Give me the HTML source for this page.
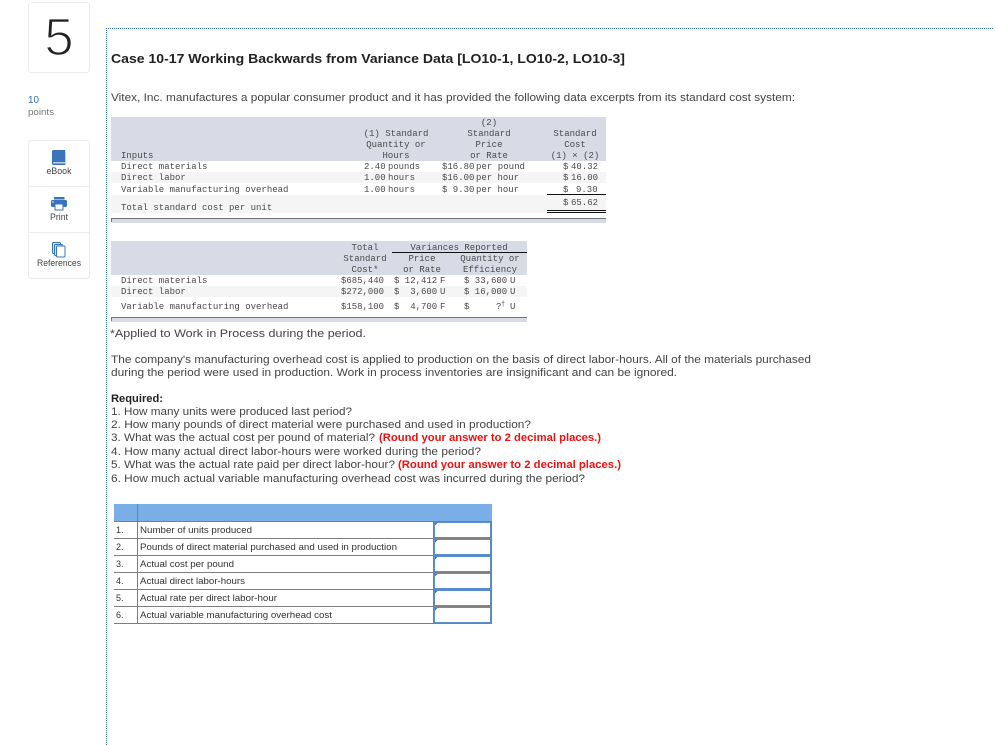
<!DOCTYPE html>
<html><head><meta charset="utf-8"><style>
html,body{margin:0;padding:0;background:#fff;overflow:hidden}
svg{display:block}
text{font-family:"Liberation Sans",sans-serif;fill:#444;white-space:pre}
.m text{font-family:"Liberation Mono",monospace;font-size:9px;fill:#4a4a4a}
.c text{text-anchor:middle}
.s{font-size:11.3px}
.b{font-weight:bold;fill:#222}
.r{font-weight:bold;fill:#f01010}
.t{font-size:9px;fill:#333}
</style></head><body>
<svg width="995" height="745" viewBox="0 0 995 745" xmlns="http://www.w3.org/2000/svg">
<!-- dotted frame -->
<line x1="106" y1="28.5" x2="994" y2="28.5" stroke="#2f6fb3" stroke-width="1" stroke-dasharray="1 1"/>
<line x1="106.5" y1="28" x2="106.5" y2="745" stroke="#2f6fb3" stroke-width="1" stroke-dasharray="1 1"/>

<!-- sidebar -->
<rect x="28.5" y="2.5" width="61" height="70" rx="3" fill="#fff" stroke="#ececec"/>
<text x="59" y="55" text-anchor="middle" stroke="#fff" stroke-width="1.6" paint-order="fill stroke" style="font-size:53px;fill:#222">5</text>
<text x="28" y="103" textLength="11" lengthAdjust="spacingAndGlyphs" style="font-size:10.5px;fill:#2f6fb3">10</text>
<text x="28" y="115" textLength="26" lengthAdjust="spacingAndGlyphs" style="font-size:9.5px;fill:#777">points</text>
<rect x="28.5" y="140.5" width="61" height="138" rx="3" fill="#fff" stroke="#ececec"/>
<line x1="29" y1="186.5" x2="89" y2="186.5" stroke="#ececec"/>
<line x1="29" y1="232.5" x2="89" y2="232.5" stroke="#ececec"/>
<!-- book -->
<rect x="54" y="151" width="12" height="14" fill="#b9cfe8"/>
<path d="M52 151.5a1.5 1.5 0 0 1 1.5-1.5H65v12H53.5a1.5 1.5 0 0 0 0 1.5H65v1.5H53.5A1.5 1.5 0 0 1 52 163.5z" fill="#3a75bb"/>
<text x="59" y="174" text-anchor="middle" textLength="25" lengthAdjust="spacingAndGlyphs" style="font-size:9px;fill:#444">eBook</text>
<!-- printer -->
<path d="M54 197h10.5v2.5H54z" fill="#3a75bb"/>
<rect x="51" y="200" width="16" height="7" rx="1.5" fill="#3a75bb"/>
<rect x="55" y="204" width="8" height="6" fill="#fff" stroke="#3a75bb"/>
<circle cx="53" cy="202" r=".7" fill="#fff"/>
<text x="59" y="220" text-anchor="middle" textLength="18" lengthAdjust="spacingAndGlyphs" style="font-size:9px;fill:#444">Print</text>
<!-- references -->
<rect x="52.5" y="242.5" width="8" height="11" rx="1" fill="#cfe0f2" stroke="#3a75bb"/>
<rect x="54.5" y="244.5" width="8" height="11" rx="1" fill="#cfe0f2" stroke="#3a75bb"/>
<rect x="56.5" y="246" width="8.5" height="11" rx="1" fill="#fff" stroke="#3a75bb"/>
<text x="59" y="266" text-anchor="middle" textLength="44" lengthAdjust="spacingAndGlyphs" style="font-size:9px;fill:#444">References</text>

<!-- heading -->
<text x="111" y="63" class="b" textLength="514" lengthAdjust="spacingAndGlyphs" style="font-size:12.6px">Case 10-17 Working Backwards from Variance Data [LO10-1, LO10-2, LO10-3]</text>
<text x="111" y="101" class="s" textLength="684" lengthAdjust="spacingAndGlyphs">Vitex, Inc. manufactures a popular consumer product and it has provided the following data excerpts from its standard cost system:</text>

<!-- table backgrounds -->
<rect x="111" y="117" width="495" height="44" fill="#d7dbe6"/>
<rect x="111" y="172" width="495" height="11" fill="#f5f5f5"/>
<rect x="111" y="195" width="495" height="18" fill="#f5f5f5"/>
<rect x="111" y="218" width="495" height="5" fill="#d7dbe6"/>
<rect x="111" y="218" width="495" height="1" fill="#777"/>
<rect x="111" y="218" width="1" height="4" fill="#777"/>
<rect x="547" y="194" width="59" height="1" fill="#111"/>
<rect x="547" y="210" width="59" height="1" fill="#111"/>
<rect x="547" y="212" width="59" height="1" fill="#111"/>
<rect x="111" y="241" width="416" height="34" fill="#d7dbe6"/>
<rect x="111" y="286" width="416" height="11" fill="#f5f5f5"/>
<rect x="111" y="317" width="416" height="5" fill="#d7dbe6"/>
<rect x="111" y="317" width="416" height="1" fill="#777"/>
<rect x="111" y="317" width="1" height="4" fill="#777"/>
<rect x="392" y="252" width="135" height="1" fill="#111"/>

<g class="m">
<text x="121" y="158">Inputs</text>
<text x="121" y="169">Direct materials</text>
<text x="121" y="180">Direct labor</text>
<text x="121" y="192">Variable manufacturing overhead</text>
<text x="121" y="210">Total standard cost per unit</text>
<text x="364" y="169">2.40</text><text x="388" y="169" textLength="32" lengthAdjust="spacingAndGlyphs">pounds</text>
<text x="364" y="180">1.00</text><text x="388" y="180" textLength="27" lengthAdjust="spacingAndGlyphs">hours</text>
<text x="364" y="192">1.00</text><text x="388" y="192" textLength="27" lengthAdjust="spacingAndGlyphs">hours</text>
<text x="442" y="169">$16.80</text><text x="476" y="169" textLength="49" lengthAdjust="spacingAndGlyphs">per pound</text>
<text x="442" y="180">$16.00</text><text x="476" y="180" textLength="43" lengthAdjust="spacingAndGlyphs">per hour</text>
<text x="442" y="192">$ 9.30</text><text x="476" y="192" textLength="43" lengthAdjust="spacingAndGlyphs">per hour</text>
<text x="563" y="169">$</text><text x="571" y="169">40.32</text>
<text x="563" y="180">$</text><text x="571" y="180">16.00</text>
<text x="563" y="192">$</text><text x="576" y="192">9.30</text>
<text x="563" y="205">$</text><text x="571" y="205">65.62</text>
<text x="341" y="283" textLength="43" lengthAdjust="spacingAndGlyphs">$685,440</text>
<text x="341" y="294" textLength="43" lengthAdjust="spacingAndGlyphs">$272,000</text>
<text x="341" y="309" textLength="43" lengthAdjust="spacingAndGlyphs">$158,100</text>
<text x="394" y="283">$ 12,412</text><text x="440" y="283">F</text>
<text x="394" y="294">$  3,600</text><text x="440" y="294">U</text>
<text x="394" y="309">$  4,700</text><text x="440" y="309">F</text>
<text x="464" y="283">$ 33,600</text><text x="510" y="283">U</text>
<text x="464" y="294">$ 16,000</text><text x="510" y="294">U</text>
<text x="464" y="309">$</text>
<text x="496" y="309">?</text>
<text x="501" y="306" style="font-size:7px">†</text>
<text x="510" y="309">U</text>
<text x="121" y="283">Direct materials</text>
<text x="121" y="294">Direct labor</text>
<text x="121" y="309">Variable manufacturing overhead</text>
</g>
<g class="m c">
<text x="396" y="136">(1) Standard</text>
<text x="396" y="147">Quantity or</text>
<text x="396" y="158">Hours</text>
<text x="489" y="125">(2)</text>
<text x="489" y="136">Standard</text>
<text x="489" y="147">Price</text>
<text x="489" y="158">or Rate</text>
<text x="575" y="136">Standard</text>
<text x="575" y="147">Cost</text>
<text x="575" y="158">(1) × (2)</text>
<text x="365" y="250">Total</text>
<text x="365" y="261">Standard</text>
<text x="365" y="272">Cost*</text>
<text x="459" y="250">Variances Reported</text>
<text x="422" y="261">Price</text>
<text x="422" y="272">or Rate</text>
<text x="490" y="261">Quantity or</text>
<text x="490" y="272">Efficiency</text>
</g>

<!-- text -->
<text x="110" y="337" class="s" textLength="256" lengthAdjust="spacingAndGlyphs">*Applied to Work in Process during the period.</text>
<text x="111" y="363" class="s" textLength="700" lengthAdjust="spacingAndGlyphs">The company's manufacturing overhead cost is applied to production on the basis of direct labor-hours. All of the materials purchased</text>
<text x="111" y="376" class="s" textLength="566" lengthAdjust="spacingAndGlyphs">during the period were used in production. Work in process inventories are insignificant and can be ignored.</text>
<text x="111" y="402" class="s b" textLength="52" lengthAdjust="spacingAndGlyphs">Required:</text>
<text x="111" y="415" class="s" textLength="241" lengthAdjust="spacingAndGlyphs">1. How many units were produced last period?</text>
<text x="111" y="428" class="s" textLength="420" lengthAdjust="spacingAndGlyphs">2. How many pounds of direct material were purchased and used in production?</text>
<text x="111" y="441" class="s" textLength="264" lengthAdjust="spacingAndGlyphs">3. What was the actual cost per pound of material?</text>
<text x="379" y="441" class="s r" textLength="222" lengthAdjust="spacingAndGlyphs">(Round your answer to 2 decimal places.)</text>
<text x="111" y="455" class="s" textLength="370" lengthAdjust="spacingAndGlyphs">4. How many actual direct labor-hours were worked during the period?</text>
<text x="111" y="468" class="s" textLength="284" lengthAdjust="spacingAndGlyphs">5. What was the actual rate paid per direct labor-hour?</text>
<text x="398" y="468" class="s r" textLength="223" lengthAdjust="spacingAndGlyphs">(Round your answer to 2 decimal places.)</text>
<text x="111" y="482" class="s" textLength="474" lengthAdjust="spacingAndGlyphs">6. How much actual variable manufacturing overhead cost was incurred during the period?</text>

<!-- answer table -->
<rect x="114" y="504" width="378" height="18" fill="#7aaee6"/>
<rect x="114" y="521" width="378" height="1" fill="#7f7f7f"/>
<rect x="137" y="504" width="1" height="119" fill="#7f7f7f"/>
<g fill="#7f7f7f">
<rect x="114" y="538" width="320" height="1"/>
<rect x="114" y="555" width="320" height="1"/>
<rect x="114" y="572" width="320" height="1"/>
<rect x="114" y="589" width="320" height="1"/>
<rect x="114" y="606" width="320" height="1"/>
<rect x="114" y="623" width="378" height="1"/>
</g>
<g fill="none" stroke="#7f7f7f" stroke-width="1">
<rect x="433.5" y="521.5" width="58" height="17"/>
<rect x="433.5" y="538.5" width="58" height="17"/>
<rect x="433.5" y="555.5" width="58" height="17"/>
<rect x="433.5" y="572.5" width="58" height="17"/>
<rect x="433.5" y="589.5" width="58" height="17"/>
<rect x="433.5" y="606.5" width="58" height="17"/>
</g>
<g fill="#fff" stroke="#5b8fd0" stroke-width="1">
<rect x="434.5" y="522.5" width="56" height="15"/>
<rect x="434.5" y="539.5" width="56" height="15"/>
<rect x="434.5" y="556.5" width="56" height="15"/>
<rect x="434.5" y="573.5" width="56" height="15"/>
<rect x="434.5" y="590.5" width="56" height="15"/>
<rect x="434.5" y="607.5" width="56" height="15"/>
</g>
<g fill="#2f6fd0">
<path d="M435 523h2.5l-2.5 2.5z"/><path d="M435 540h2.5l-2.5 2.5z"/><path d="M435 557h2.5l-2.5 2.5z"/>
<path d="M435 574h2.5l-2.5 2.5z"/><path d="M435 591h2.5l-2.5 2.5z"/><path d="M435 608h2.5l-2.5 2.5z"/>
</g>
<text x="116" y="533" class="t">1.</text>
<text x="116" y="550" class="t">2.</text>
<text x="116" y="567" class="t">3.</text>
<text x="116" y="584" class="t">4.</text>
<text x="116" y="601" class="t">5.</text>
<text x="116" y="618" class="t">6.</text>
<text x="140" y="533" class="t" textLength="112" lengthAdjust="spacingAndGlyphs">Number of units produced</text>
<text x="140" y="550" class="t" textLength="257" lengthAdjust="spacingAndGlyphs">Pounds of direct material purchased and used in production</text>
<text x="140" y="567" class="t" textLength="94" lengthAdjust="spacingAndGlyphs">Actual cost per pound</text>
<text x="140" y="584" class="t" textLength="105" lengthAdjust="spacingAndGlyphs">Actual direct labor-hours</text>
<text x="140" y="601" class="t" textLength="137" lengthAdjust="spacingAndGlyphs">Actual rate per direct labor-hour</text>
<text x="140" y="618" class="t" textLength="192" lengthAdjust="spacingAndGlyphs">Actual variable manufacturing overhead cost</text>
</svg>
</body></html>
